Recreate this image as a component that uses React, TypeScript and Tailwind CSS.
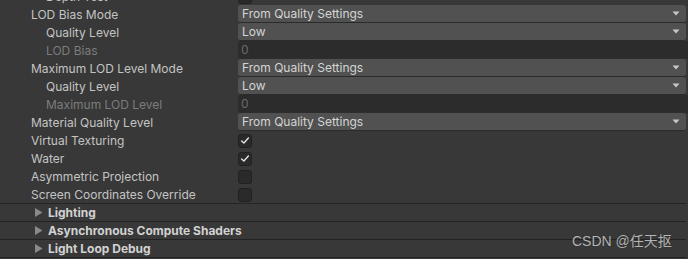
import React from "react";

type Row =
  | { kind: "dropdown"; label: string; value: string; indent?: boolean }
  | { kind: "field"; label: string; value: string; indent?: boolean }
  | { kind: "check"; label: string; checked: boolean; indent?: boolean };

const rows: Row[] = [
  { kind: "check", label: "Depth Test", checked: false, indent: true },
  { kind: "dropdown", label: "LOD Bias Mode", value: "From Quality Settings" },
  { kind: "dropdown", label: "Quality Level", value: "Low", indent: true },
  { kind: "field", label: "LOD Bias", value: "0", indent: true },
  { kind: "dropdown", label: "Maximum LOD Level Mode", value: "From Quality Settings" },
  { kind: "dropdown", label: "Quality Level", value: "Low", indent: true },
  { kind: "field", label: "Maximum LOD Level", value: "0", indent: true },
  { kind: "dropdown", label: "Material Quality Level", value: "From Quality Settings" },
  { kind: "check", label: "Virtual Texturing", checked: true },
  { kind: "check", label: "Water", checked: true },
  { kind: "check", label: "Asymmetric Projection", checked: false },
  { kind: "check", label: "Screen Coordinates Override", checked: false },
];

function Arrow() {
  return (
    <svg width="8" height="5" viewBox="0 0 8 5" className="shrink-0">
      <path d="M0.5 0.5 L7.5 0.5 L4 4.5 Z" fill="#c8c8c8" />
    </svg>
  );
}

function Check() {
  return (
    <svg width="10" height="9" viewBox="0 0 10 9">
      <path d="M1.6 4.9 L3.9 7 L8.4 2" stroke="#e2e2e2" strokeWidth="1.4" fill="none" strokeLinecap="round" strokeLinejoin="round" />
    </svg>
  );
}

function Value({ row }: { row: Row }) {
  if (row.kind === "dropdown") {
    return (
      <div className="flex h-[18px] flex-1 items-center justify-between rounded-[3px] border-b border-[#2b2b2b] bg-[#515151] pl-[4px] pr-[6px] text-[12px] text-[#d4d4d4]">
        <span className="pt-[1px]">{row.value}</span>
        <Arrow />
      </div>
    );
  }
  if (row.kind === "field") {
    return (
      <div className="-mr-[2px] flex h-[18px] flex-1 items-center rounded-l-[3px] border-b border-[#2e2e2e] bg-[#2c2c2c] pl-[3px] text-[12px] text-[#6a6a6a]">
        <span className="pt-[1px]">{row.value}</span>
      </div>
    );
  }
  return (
    <div className="flex h-[18px] flex-1 items-center">
      <div className="mt-[1px] flex h-[14px] w-[14px] items-center justify-center rounded-[3px] border border-[#212121] bg-[#2a2a2a]">
        {row.checked && <Check />}
      </div>
    </div>
  );
}

function Header({ label }: { label: string }) {
  return (
    <div className="flex h-[18px] items-center border-t border-[#232323] pl-[35px]">
      <svg width="8" height="9" viewBox="0 0 8 9" className="mr-[5px]">
        <path d="M0 0 L7.5 4.5 L0 9 Z" fill="#8a8a8a" />
      </svg>
      <span className="text-[12px] font-bold text-[#d2d2d2]">{label}</span>
    </div>
  );
}

export default function App() {
  return (
    <div
      className="relative h-[259px] w-[688px] overflow-hidden bg-[#383838]"
      style={{ fontFamily: "Inter, 'Noto Sans', sans-serif" }}
    >
      <div className="-mt-[13px] flex flex-col pr-[2px]">
        {rows.map((r, i) => {
          const disabled = r.kind === "field";
          return (
            <div key={i} className="flex h-[18px] items-center">
              <div
                className={`w-[238px] shrink-0 pt-[1px] text-[12px] leading-[18px] ${r.indent ? "pl-[46px]" : "pl-[31px]"} ${disabled ? "text-[#7c7c7c]" : "text-[#c4c4c4]"}`}
              >
                {r.label}
              </div>
              <Value row={r} />
            </div>
          );
        })}
        <Header label="Lighting" />
        <Header label="Asynchronous Compute Shaders" />
        <Header label="Light Loop Debug" />
        <div className="border-t border-[#232323]" />
      </div>
      <div
        className="absolute left-[572px] top-[232px] text-[14px] leading-[18px] text-[#b4b4b4]"
        style={{ fontFamily: "'Liberation Sans', 'Noto Sans CJK SC', sans-serif", textShadow: "0 0 1px #222" }}
      >
        CSDN @任天抠
      </div>
    </div>
  );
}
